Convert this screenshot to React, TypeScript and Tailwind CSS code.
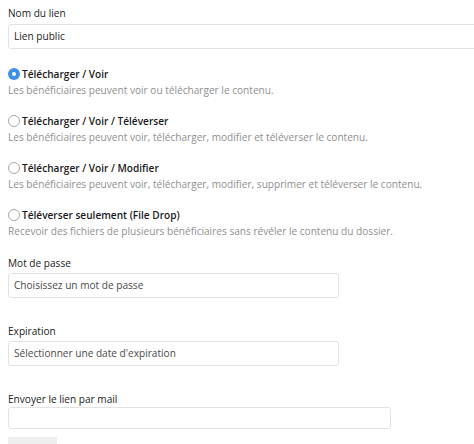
import React from "react";

const font = { fontFamily: '"Open Sans", "Liberation Sans", sans-serif' };

function Radio({ checked }: { checked?: boolean }) {
  return checked ? (
    <span className="mr-[2px] inline-flex h-[12px] w-[12px] shrink-0 items-center justify-center rounded-full bg-[#3d8fe8]">
      <span className="h-[4px] w-[4px] rounded-full bg-white" />
    </span>
  ) : (
    <span className="mr-[2px] inline-block h-[12px] w-[12px] shrink-0 rounded-full border border-[#a8a8a8] bg-white" />
  );
}

function Option({ title, desc, checked }: { title: string; desc: string; checked?: boolean }) {
  return (
    <div>
      <div className="flex items-center text-[10.1px] font-semibold leading-[16px] text-[#1a1a1a]">
        <Radio checked={checked} />
        <span>{title}</span>
      </div>
      <div className="text-[10.1px] leading-[16px] text-[#8f8f8f]">{desc}</div>
    </div>
  );
}

export default function App() {
  return (
    <div className="h-[444px] w-[474px] overflow-hidden bg-white" style={font}>
      <div className="pl-2 pt-[5px]">
        <div className="text-[10.1px] leading-[16px] text-[#222]">Nom du lien</div>
        <div className="mt-[3px] flex h-[25px] w-[480px] items-center rounded-[3px] border border-[#e2e2e2] px-[5px] text-[10.1px] text-[#222]">
          Lien public
        </div>

        <div className="mt-[17px] flex flex-col gap-[15px]">
          <Option checked title="Télécharger / Voir" desc="Les bénéficiaires peuvent voir ou télécharger le contenu." />
          <Option title="Télécharger / Voir / Téléverser" desc="Les bénéficiaires peuvent voir, télécharger, modifier et téléverser le contenu." />
          <Option title="Télécharger / Voir / Modifier" desc="Les bénéficiaires peuvent voir, télécharger, modifier, supprimer et téléverser le contenu." />
          <Option title="Téléverser seulement (File Drop)" desc="Recevoir des fichiers de plusieurs bénéficiaires sans révéler le contenu du dossier." />
        </div>

        <div className="mt-[16px] text-[10.1px] leading-[16px] text-[#222]">Mot de passe</div>
        <div className="mt-[2px] flex h-[25px] w-[331px] items-center rounded-[3px] border border-[#e2e2e2] px-[5px] text-[10.1px] text-[#4a4a4a]">
          Choisissez un mot de passe
        </div>

        <div className="mt-[25px] text-[10.1px] leading-[16px] text-[#222]">Expiration</div>
        <div className="mt-[2px] flex h-[25px] w-[331px] items-center rounded-[3px] border border-[#e2e2e2] px-[5px] text-[10.1px] text-[#4a4a4a]">
          Sélectionner une date d'expiration
        </div>

        <div className="mt-[25px] text-[10.1px] leading-[16px] text-[#222]">Envoyer le lien par mail</div>
        <div className="mt-0 h-[22px] w-[383px] rounded-[3px] border border-[#e2e2e2]" />
        <div className="mt-[8px] h-[10px] w-[49px] bg-[#eeeeee]" />
      </div>
    </div>
  );
}
